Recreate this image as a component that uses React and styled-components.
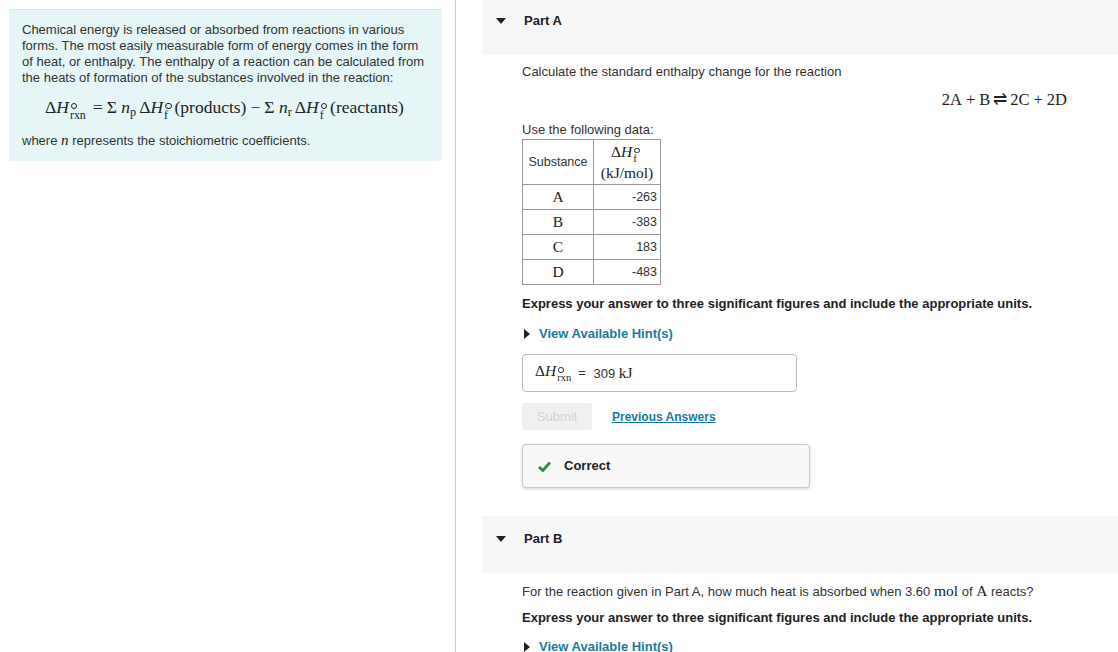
import React from "react";
import styled, { createGlobalStyle } from "styled-components";

const GlobalStyle = createGlobalStyle`
  html, body {
    margin: 0;
    padding: 0;
    background: #fff;
    font-family: "Liberation Sans", Arial, sans-serif;
    color: #333;
  }
`;

const Page = styled.div`
  display: grid;
  grid-template-columns: 455px 1fr;
  width: 1118px;
  height: 652px;
  overflow: hidden;
`;

const LeftCol = styled.div`
  padding: 9px 13px 0 9px;
`;

const IntroPanel = styled.div`
  background: #e6f6f7;
  border-top: 1px solid #dde3e4;
  padding: 12px 13px 12px 13px;
  font-size: 13px;
  line-height: 16px;
`;

const Para = styled.p`
  margin: 0;
`;

const FormulaBlock = styled.div`
  text-align: center;
  font-family: "Liberation Serif", "Times New Roman", serif;
  font-size: 17.5px;
  line-height: 20px;
  margin: 11px 0 11px;
  padding-right: 2px;
  color: #222;
`;

const RightCol = styled.div`
  border-left: 1px solid #c6cdd3;
  padding-left: 26px;
`;

const PartHeader = styled.div`
  display: flex;
  align-items: flex-start;
  gap: 18px;
  height: 57px;
  box-sizing: border-box;
  padding: 15px 0 0 14px;
  background: #f7f7f7;
  font-weight: bold;
  font-size: 13px;
  color: #222;
  margin-top: ${(p) => p.$top || 0}px;
`;

const Caret = styled.span`
  display: inline-block;
  width: 0;
  height: 0;
  margin-top: ${(p) => (p.$right ? 0 : 5)}px;
  border-left: ${(p) => (p.$right ? "6px solid #222" : "5px solid transparent")};
  border-right: ${(p) => (p.$right ? "0" : "5px solid transparent")};
  border-top: ${(p) => (p.$right ? "5px solid transparent" : "6px solid #222")};
  border-bottom: ${(p) => (p.$right ? "5px solid transparent" : "0")};
`;

const Body = styled.div`
  padding-left: 40px;
  padding-right: 51px;
  font-size: 13px;
  line-height: 16px;
`;

const Line = styled.p`
  margin: ${(p) => p.$mt || 0}px 0 0;
`;

const Strong = styled.p`
  margin: ${(p) => p.$mt || 0}px 0 0;
  font-weight: bold;
  font-size: 13px;
  color: #222;
`;

const Reaction = styled.div`
  text-align: right;
  font-family: "Liberation Serif", "Times New Roman", serif;
  font-size: 16.5px;
  line-height: 20px;
  margin-top: 10px;
  color: #222;
`;

const DataTable = styled.table`
  border-collapse: collapse;
  margin-top: 1px;
  font-size: 12.5px;
  th, td {
    border: 1px solid #999;
    padding: 0 3px;
    height: 24px;
  }
  th {
    font-weight: normal;
    height: 44px;
  }
`;

const SerifCell = styled.td`
  text-align: center;
  font-family: "Liberation Serif", "Times New Roman", serif;
  font-size: 15.5px;
  width: 64px;
  color: #222;
`;

const NumCell = styled.td`
  text-align: right;
  width: 60px;
`;

const UnitHead = styled.th`
  font-family: "Liberation Serif", "Times New Roman", serif;
  font-size: 15.5px;
  line-height: 19px;
  color: #222;
`;

const Hint = styled.div`
  display: flex;
  align-items: center;
  gap: 9px;
  margin-top: ${(p) => p.$mt || 0}px;
  font-weight: bold;
  font-size: 13px;
  color: #1a7b9d;
  padding-left: 2px;
`;

const AnswerBox = styled.div`
  margin-top: 12px;
  width: 275px;
  height: 38px;
  box-sizing: border-box;
  border: 1px solid #bbb;
  border-radius: 4px;
  display: flex;
  align-items: center;
  padding-left: 12px;
  gap: 4px;
  font-size: 13px;
`;

const ActionRow = styled.div`
  display: flex;
  align-items: center;
  gap: 20px;
  margin-top: 11px;
`;

const SubmitBtn = styled.button`
  width: 70px;
  height: 27px;
  border: none;
  background: #f0f0f0;
  color: #d4d4d4;
  font-family: "Liberation Sans", Arial, sans-serif;
  font-size: 13px;
  border-radius: 2px;
  padding: 0;
`;

const PrevLink = styled.a`
  color: #1a7b9d;
  font-weight: bold;
  font-size: 12px;
  text-decoration: underline;
`;

const Feedback = styled.div`
  margin-top: 14px;
  width: 288px;
  height: 44px;
  box-sizing: border-box;
  border: 1px solid #c8c8c8;
  border-radius: 4px;
  background: #f8f8f8;
  box-shadow: 0 1px 3px rgba(0, 0, 0, 0.18);
  display: flex;
  align-items: center;
  gap: 13px;
  padding-left: 15px;
  font-weight: bold;
  font-size: 13px;
  color: #222;
`;

/* math bits */
const M = styled.span`
  font-family: "Liberation Serif", "Times New Roman", serif;
  font-style: normal;
  white-space: nowrap;
  color: #222;
  font-size: ${(p) => p.$size || "inherit"};
`;

const I = styled.i`
  font-style: italic;
`;

const Stack = styled.span`
  display: inline-flex;
  flex-direction: column;
  align-items: flex-start;
  vertical-align: 0.3em;
  font-size: 0.68em;
  line-height: 0.82em;
  margin-left: 1px;
  margin-right: 3px;
`;

const Ring = styled.span`
  display: block;
  width: 0.34em;
  height: 0.34em;
  border: 1px solid currentColor;
  border-radius: 50%;
  margin: 0 0 0.12em 0.12em;
`;

const Sub = styled.sub`
  font-size: 0.7em;
  line-height: 0;
  vertical-align: -0.25em;
  margin-right: 3px;
`;

const Op = styled.span`
  margin: 0 ${(p) => p.$gap || 4}px;
`;

const DH = ({ sub }) => (
  <>
    Δ<I>H</I>
    <Stack>
      <Ring />
      <span>{sub}</span>
    </Stack>
  </>
);

const Check = () => (
  <svg width="13" height="11" viewBox="0 0 13 11">
    <path d="M1 6 L4.8 9.5 L12 1.5" fill="none" stroke="#2e8b3a" strokeWidth="2.8" />
  </svg>
);

export default function App() {
  return (
    <>
      <GlobalStyle />
      <Page>
        <LeftCol>
          <IntroPanel>
            <Para>
              Chemical energy is released or absorbed from reactions in various forms. The most
              easily measurable form of energy comes in the form of heat, or enthalpy. The
              enthalpy of a reaction can be calculated from the heats of formation of the
              substances involved in the reaction:
            </Para>
            <FormulaBlock>
              <DH sub="rxn" />
              <Op>=</Op>Σ <I>n</I>
              <Sub>p</Sub>
              <DH sub="f" />(products)<Op>−</Op>Σ <I>n</I>
              <Sub>r</Sub>
              <DH sub="f" />(reactants)
            </FormulaBlock>
            <Para>
              where{" "}
              <M $size="15px">
                <I>n</I>
              </M>{" "}
              represents the stoichiometric coefficients.
            </Para>
          </IntroPanel>
        </LeftCol>

        <RightCol>
          <PartHeader $top={-2}>
            <Caret />
            <span>Part A</span>
          </PartHeader>
          <Body>
            <Line $mt={9}>Calculate the standard enthalpy change for the reaction</Line>
            <Reaction>
              2A<Op>+</Op>B<Op $gap={3}>⇌</Op>2C<Op>+</Op>2D
            </Reaction>
            <Line $mt={12}>Use the following data:</Line>
            <DataTable>
              <thead>
                <tr>
                  <th>Substance</th>
                  <UnitHead>
                    Δ<I>H</I>
                    <Stack>
                      <Ring />
                      <span>f</span>
                    </Stack>
                    <br />
                    (kJ/mol)
                  </UnitHead>
                </tr>
              </thead>
              <tbody>
                {[
                  ["A", "-263"],
                  ["B", "-383"],
                  ["C", "183"],
                  ["D", "-483"],
                ].map(([s, v]) => (
                  <tr key={s}>
                    <SerifCell>{s}</SerifCell>
                    <NumCell>{v}</NumCell>
                  </tr>
                ))}
              </tbody>
            </DataTable>
            <Strong $mt={11}>
              Express your answer to three significant figures and include the appropriate units.
            </Strong>
            <Hint $mt={14}>
              <Caret $right />
              View Available Hint(s)
            </Hint>
            <AnswerBox>
              <M $size="15.5px">
                <DH sub="rxn" />
              </M>
              <span>=</span>
              <span>
                &nbsp;309 <M $size="15.5px">kJ</M>
              </span>
            </AnswerBox>
            <ActionRow>
              <SubmitBtn>Submit</SubmitBtn>
              <PrevLink href="#">Previous Answers</PrevLink>
            </ActionRow>
            <Feedback>
              <Check />
              Correct
            </Feedback>
          </Body>

          <PartHeader $top={28}>
            <Caret />
            <span>Part B</span>
          </PartHeader>
          <Body>
            <Line $mt={10}>
              For the reaction given in Part A, how much heat is absorbed when 3.60{" "}
              <M $size="15.5px">mol</M> of <M $size="15.5px">A</M> reacts?
            </Line>
            <Strong $mt={10}>
              Express your answer to three significant figures and include the appropriate units.
            </Strong>
            <Hint $mt={13}>
              <Caret $right />
              View Available Hint(s)
            </Hint>
          </Body>
        </RightCol>
      </Page>
    </>
  );
}
